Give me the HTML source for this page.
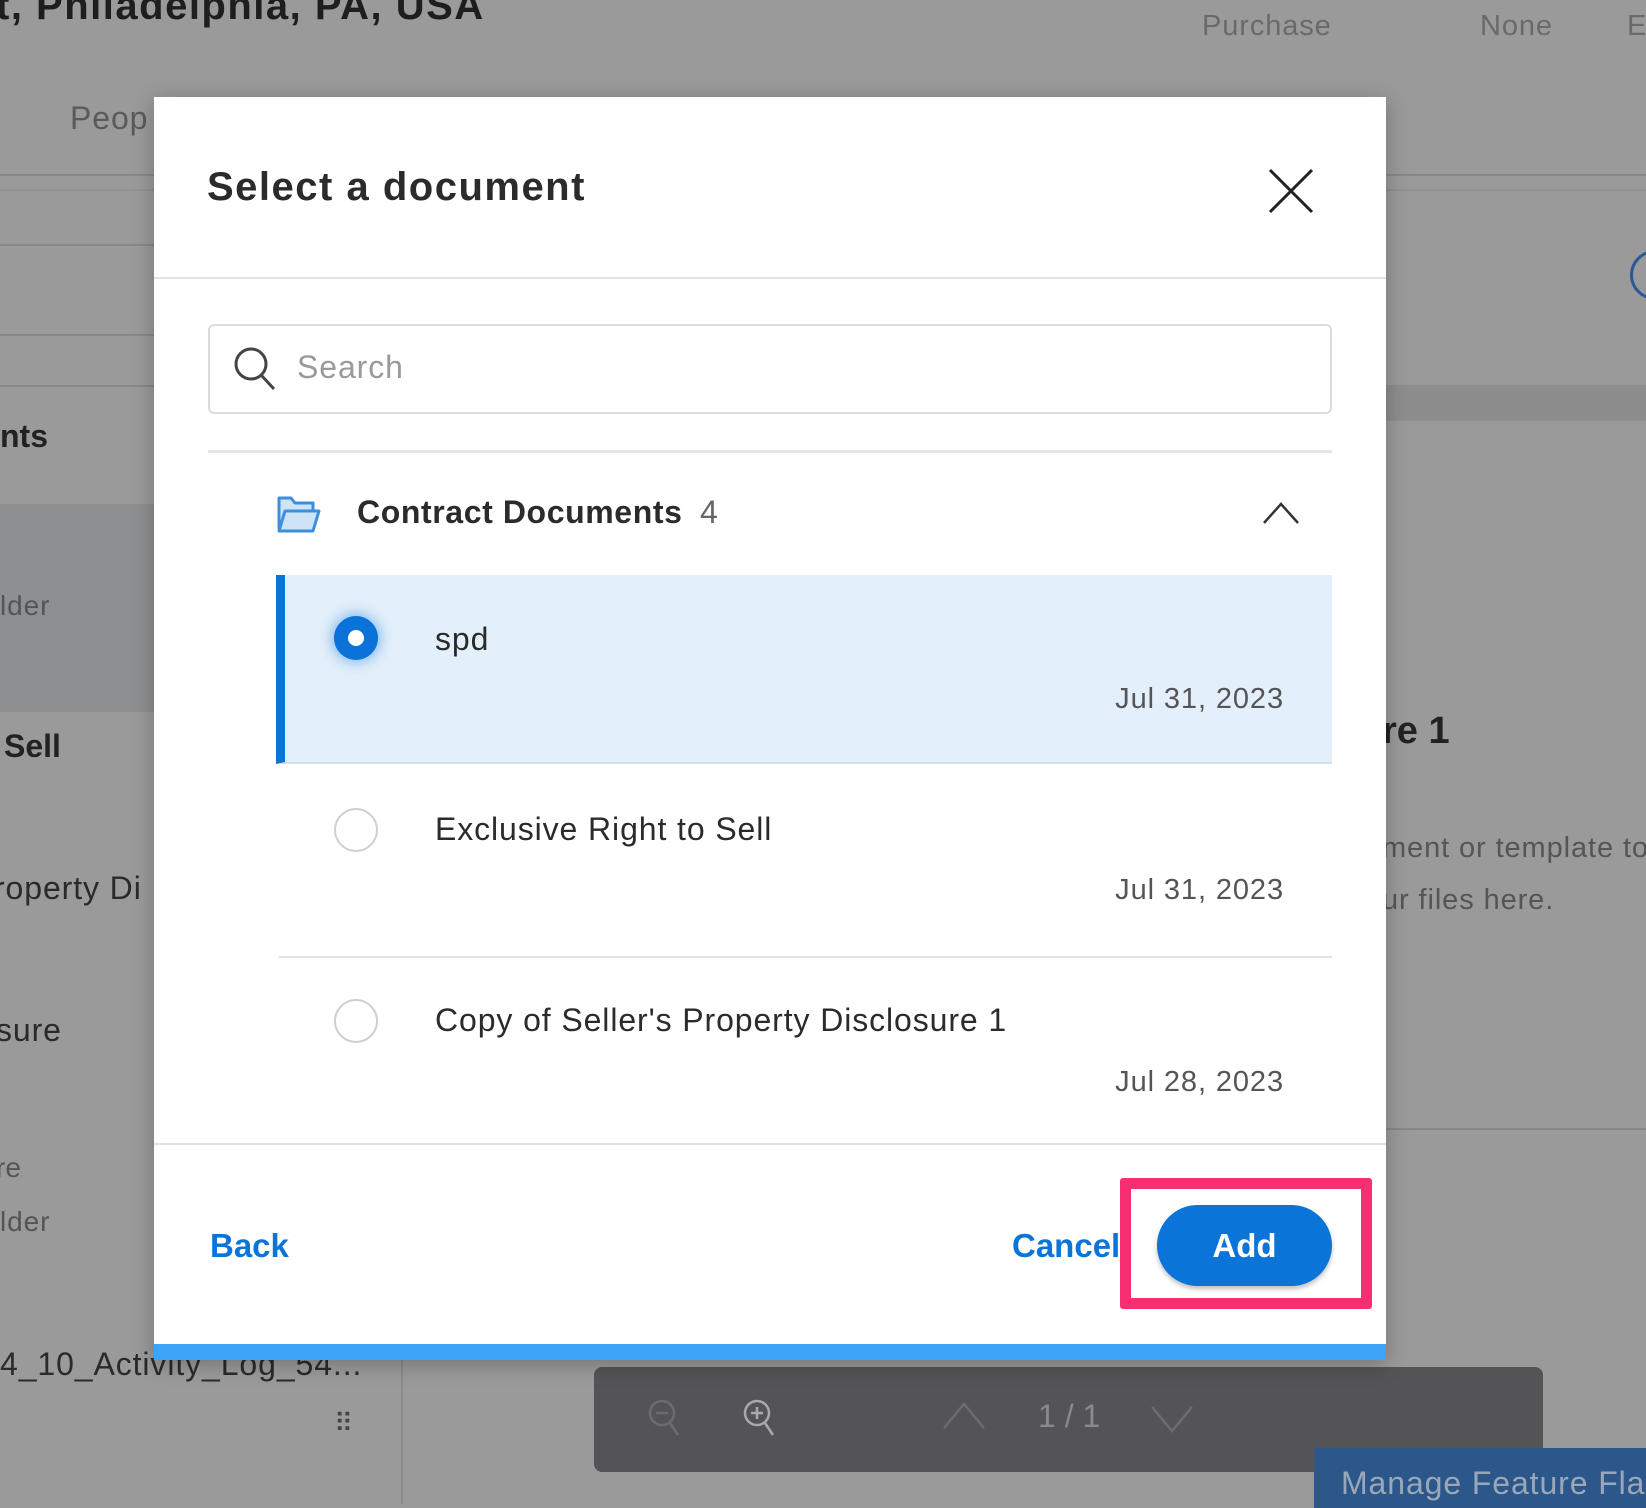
<!DOCTYPE html>
<html><head><meta charset="utf-8"><style>
*{box-sizing:border-box;margin:0;padding:0}
body{width:1646px;height:1504px;overflow:hidden;background:#9a9a9a;font-family:"Liberation Sans",sans-serif;position:relative}
.a{position:absolute;white-space:nowrap}
.ln{position:absolute;height:2px;background:#888}
.modal{position:absolute;left:154px;top:97px;width:1232px;height:1263px;background:#fff;box-shadow:0 4px 20px rgba(0,0,0,.25)}
.t{letter-spacing:0.9px}
</style></head><body>
<div class="a" style="left:-4px;top:-16px;font-size:40px;font-weight:bold;color:#1e1e1e;letter-spacing:1.5px">t, Philadelphia, PA, USA</div>
<div class="a t" style="left:1202px;top:10px;font-size:29px;color:#6a6a6a">Purchase</div>
<div class="a t" style="left:1480px;top:10px;font-size:29px;color:#6a6a6a">None</div>
<div class="a" style="left:1627px;top:10px;font-size:29px;color:#6a6a6a">E</div>
<div class="a t" style="left:70px;top:100px;font-size:32px;color:#5a5a5a">Peop</div>
<div class="ln" style="left:0;top:174px;width:1646px"></div>
<div class="ln" style="left:0;top:189px;width:1646px;background:#909090"></div>
<div class="ln" style="left:0;top:244px;width:154px"></div>
<div class="ln" style="left:0;top:334px;width:154px"></div>
<div class="ln" style="left:0;top:385px;width:154px"></div>
<div class="a" style="left:1386px;top:385px;width:260px;height:36px;background:#8d8d8d"></div>
<div class="a" style="left:1630px;top:250px;width:50px;height:50px;border:3px solid #2a5a95;border-radius:50%"></div>
<div class="a" style="left:0;top:418px;font-size:32px;font-weight:bold;color:#222">nts</div>
<div class="a" style="left:0;top:504px;width:154px;height:208px;background:#8e8f91"></div>
<div class="a t" style="left:0;top:590px;font-size:28px;color:#555">lder</div>
<div class="a" style="left:4px;top:728px;font-size:32px;font-weight:bold;color:#222">Sell</div>
<div class="a t" style="left:-6px;top:870px;font-size:32px;color:#2a2a2a">roperty Di</div>
<div class="a t" style="left:-4px;top:1012px;font-size:32px;color:#2a2a2a">sure</div>
<div class="a" style="left:-4px;top:1152px;font-size:28px;color:#555">re</div>
<div class="a t" style="left:0;top:1206px;font-size:28px;color:#555">lder</div>
<div class="a t" style="left:0;top:1346px;font-size:32px;color:#2a2a2a">4_10_Activity_Log_54...</div>
<div class="a" style="left:334px;top:1418px;font-size:26px;color:#444;line-height:10px">⠿</div>
<div class="a" style="left:401px;top:1360px;width:2px;height:144px;background:#8a8a8a"></div>
<div class="a" style="left:1382px;top:710px;font-size:38px;font-weight:bold;color:#222">re 1</div>
<div class="a t" style="left:1382px;top:832px;font-size:29px;color:#555">ment or template to</div>
<div class="a t" style="left:1382px;top:884px;font-size:29px;color:#555">ur files here.</div>
<div class="ln" style="left:1386px;top:1128px;width:260px"></div>
<div class="a" style="left:594px;top:1367px;width:949px;height:105px;background:#545457;border-radius:8px"></div>
<svg class="a" style="left:645px;top:1395px" width="40" height="50" viewBox="0 0 40 50" fill="none" stroke="#6c6c6e" stroke-width="2.5"><circle cx="17" cy="18" r="12"/><path d="M11 18h12M25 28l8 12"/></svg>
<svg class="a" style="left:740px;top:1395px" width="40" height="50" viewBox="0 0 40 50" fill="none" stroke="#a9a9ab" stroke-width="2.5"><circle cx="17" cy="18" r="12"/><path d="M11 18h12M17 12v12M25 28l8 12"/></svg>
<svg class="a" style="left:942px;top:1400px" width="44" height="30" fill="none" stroke="#6c6c6e" stroke-width="2.5"><path d="M2 28L22 4 42 28"/></svg>
<div class="a" style="left:1038px;top:1398px;font-size:32px;color:#8a8a8c">1 / 1</div>
<svg class="a" style="left:1150px;top:1405px" width="44" height="30" fill="none" stroke="#6c6c6e" stroke-width="2.5"><path d="M2 2L22 26 42 2"/></svg>
<div class="a" style="left:1314px;top:1448px;width:340px;height:60px;background:#2c578a"></div>
<div class="a t" style="left:1341px;top:1465px;font-size:32px;color:#9aa7b8">Manage Feature Fla</div>

<div class="modal">
<div class="a" style="left:53px;top:68px;font-size:40px;font-weight:bold;color:#2b2b2b;letter-spacing:1.5px">Select a document</div>
<svg class="a" style="left:1113px;top:70px" width="48" height="48" stroke="#222" stroke-width="3"><path d="M3 3L45 45M45 3L3 45"/></svg>
<div class="a" style="left:0;top:180px;width:1232px;height:2px;background:#e2e2e2"></div>
<div class="a" style="left:54px;top:227px;width:1124px;height:90px;border:2px solid #dcdcdc;border-radius:6px"></div>
<svg class="a" style="left:78px;top:248px" width="46" height="48" fill="none" stroke="#444" stroke-width="3"><circle cx="19" cy="19" r="15"/><path d="M30 31l12 13"/></svg>
<div class="a t" style="left:143px;top:252px;font-size:32px;color:#9a9a9a">Search</div>
<div class="a" style="left:54px;top:353px;width:1124px;height:3px;background:#e6e6e6"></div>
<svg class="a" style="left:122px;top:396px" width="46" height="42" viewBox="0 0 46 42" fill="#cfe3f7" stroke="#3b8fdc" stroke-width="3" stroke-linejoin="round"><path d="M3 36V5h12l4 5h18v8"/><path d="M3 38L9 18h34l-6 20z"/></svg>
<div class="a" style="left:203px;top:397px;font-size:32px;font-weight:bold;color:#2b2b2b;letter-spacing:0.6px">Contract Documents <span style="font-weight:normal;color:#666;margin-left:8px">4</span></div>
<svg class="a" style="left:1108px;top:404px" width="38" height="24" fill="none" stroke="#333" stroke-width="2.5"><path d="M2 22L19 3 36 22"/></svg>
<div class="a" style="left:122px;top:478px;width:1056px;height:189px;background:#e3effa;border-left:9px solid #0b74d9;border-bottom:2px solid #d5dde6"></div>
<div class="a" style="left:180px;top:519px;width:44px;height:44px;border-radius:50%;background:#fff;border:14px solid #0a72d8;box-shadow:0 0 12px 3px rgba(30,130,230,.45)"></div>
<div class="a t" style="left:281px;top:524px;font-size:32px;color:#2b2b2b">spd</div>
<div class="a t" style="right:102px;top:586px;font-size:29px;color:#555">Jul 31, 2023</div>
<div class="a" style="left:180px;top:711px;width:44px;height:44px;border-radius:50%;border:2.5px solid #cfcfcf"></div>
<div class="a t" style="left:281px;top:714px;font-size:32px;color:#2b2b2b">Exclusive Right to Sell</div>
<div class="a t" style="right:102px;top:777px;font-size:29px;color:#555">Jul 31, 2023</div>
<div class="a" style="left:125px;top:859px;width:1053px;height:2px;background:#e2e2e2"></div>
<div class="a" style="left:180px;top:902px;width:44px;height:44px;border-radius:50%;border:2.5px solid #cfcfcf"></div>
<div class="a t" style="left:281px;top:905px;font-size:32px;color:#2b2b2b">Copy of Seller's Property Disclosure 1</div>
<div class="a t" style="right:102px;top:969px;font-size:29px;color:#555">Jul 28, 2023</div>
<div class="a" style="left:0;top:1046px;width:1232px;height:2px;background:#e2e2e2"></div>
<div class="a" style="left:56px;top:1130px;font-size:33px;font-weight:bold;color:#0b74d9">Back</div>
<div class="a" style="left:858px;top:1130px;font-size:33px;font-weight:bold;color:#0b74d9">Cancel</div>
<div class="a" style="left:966px;top:1081px;width:252px;height:131px;border:11px solid #f72e6f;border-radius:3px"></div>
<div class="a" style="left:1003px;top:1108px;width:175px;height:81px;background:#0b74d9;border-radius:41px;box-shadow:0 3px 5px rgba(0,0,0,.25);color:#fff;font-size:33px;font-weight:bold;text-align:center;line-height:81px">Add</div>
<div class="a" style="left:0;top:1247px;width:1232px;height:16px;background:#3ea5f6"></div>
</div>
</body></html>
